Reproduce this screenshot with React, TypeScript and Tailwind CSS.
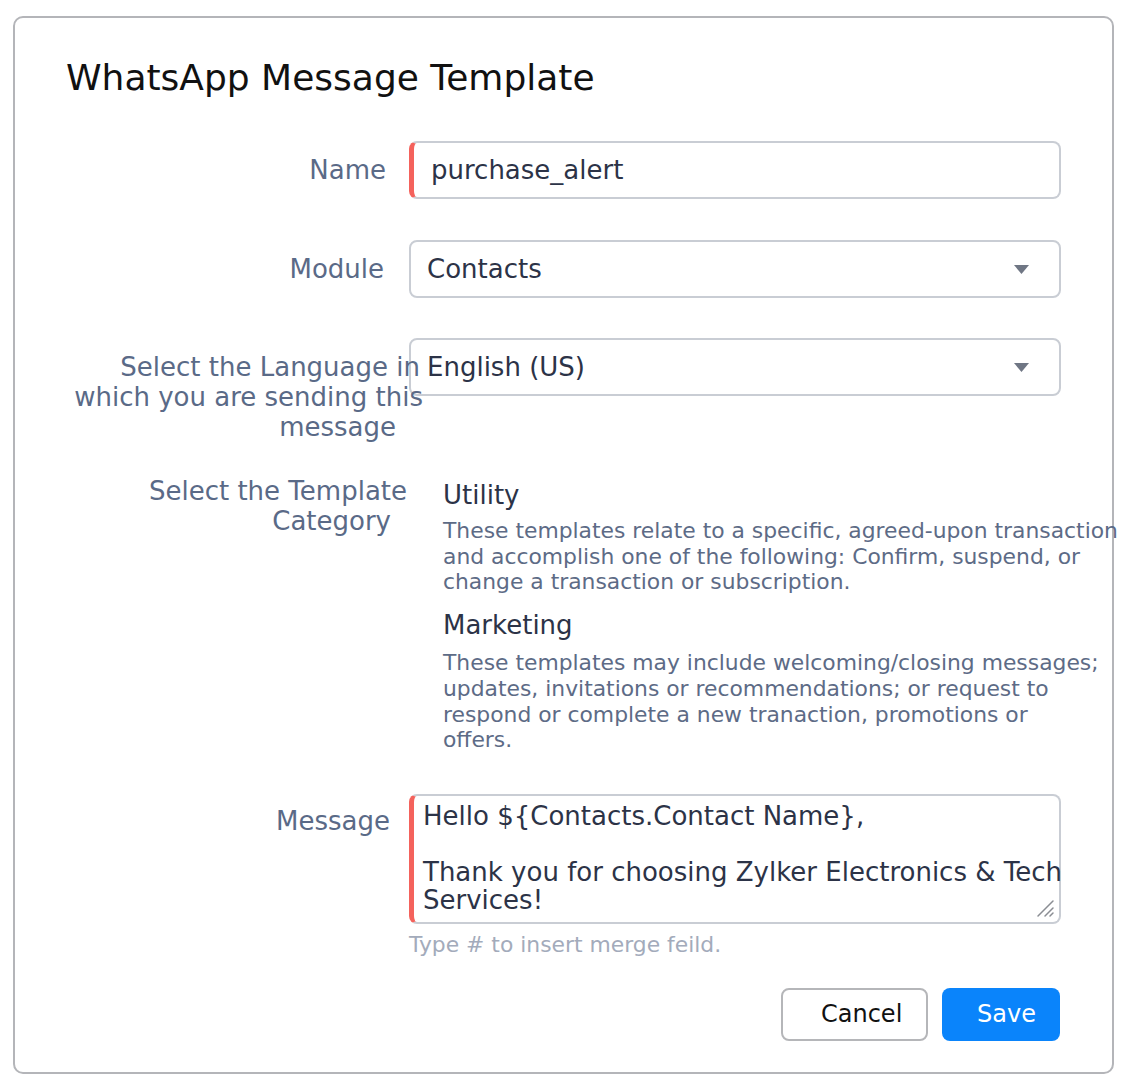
import React from "react";

const font = { fontFamily: '"DejaVu Sans", Verdana, sans-serif' };

function Caret() {
  return (
    <svg width="15" height="9" viewBox="0 0 15 9" className="shrink-0">
      <path d="M0 0 H15 L7.5 9 Z" fill="#6f7684" />
    </svg>
  );
}

function SelectBox({ value }: { value: string }) {
  return (
    <div className="flex h-[58px] w-[652px] items-center justify-between rounded-[8px] border-2 border-[#c9cdd4] pl-[16px] pr-[30px] text-[26px] text-[#2c3347]">
      <span>{value}</span>
      <Caret />
    </div>
  );
}

export default function App() {
  return (
    <div className="min-h-[1087px] bg-white pl-[13px] pt-[16px]" style={font}>
      <div className="h-[1058px] w-[1101px] rounded-[10px] border-2 border-[#b4b5b9] pl-[51px] pt-[39px]">
        <h1 className="text-[36px] leading-[42px] text-[#111111]">WhatsApp Message Template</h1>

        {/* Name */}
        <div className="mt-[42px] flex items-center">
          <div className="w-[322px] shrink-0 pr-[2px] text-right text-[26px] text-[#5a6a87]">Name</div>
          <div className="ml-[21px] flex h-[58px] w-[652px] items-center rounded-[8px] border-2 border-l-[5px] border-[#c9cdd4] border-l-[#f4625c] pl-[17px] text-[26px] text-[#2c3347]">
            purchase_alert
          </div>
        </div>

        {/* Module */}
        <div className="mt-[41px] flex items-center">
          <div className="w-[322px] shrink-0 pr-[4px] text-right text-[26px] text-[#5a6a87]">Module</div>
          <div className="ml-[21px]">
            <SelectBox value="Contacts" />
          </div>
        </div>

        {/* Language */}
        <div className="mt-[40px] flex items-start">
          <div className="relative z-10 w-[322px] shrink-0 pt-[14px] text-right text-[26px] leading-[30px] text-[#5a6a87]">
            <span className="-mr-[32px] block whitespace-nowrap">Select the Language in</span>
            <span className="-mr-[35px] block whitespace-nowrap">which you are sending this</span>
            <span className="-mr-[8px] block whitespace-nowrap">message</span>
          </div>
          <div className="ml-[21px]">
            <SelectBox value="English (US)" />
          </div>
        </div>

        {/* Category */}
        <div className="mt-[34px] flex items-start">
          <div className="w-[322px] shrink-0 text-right text-[26px] leading-[30px] text-[#5a6a87]">
            <span className="-mr-[19px] block whitespace-nowrap">Select the Template</span>
            <span className="-mr-[3px] block whitespace-nowrap">Category</span>
          </div>
          <div className="ml-[55px] pt-[2px]">
            <div className="text-[26px] leading-[34px] text-[#2c3347]">Utility</div>
            <div className="mt-[6px] whitespace-nowrap text-[21.85px] leading-[25.7px] text-[#5d6b86]">
              <div>These templates relate to a specific, agreed-upon transaction</div>
              <div>and accomplish one of the following: Confirm, suspend, or</div>
              <div>change a transaction or subscription.</div>
            </div>
            <div className="mt-[13px] text-[26px] leading-[34px] text-[#2c3347]">Marketing</div>
            <div className="mt-[8px] whitespace-nowrap text-[21.85px] leading-[25.7px] text-[#5d6b86]">
              <div>These templates may include welcoming/closing messages;</div>
              <div>updates, invitations or recommendations; or request to</div>
              <div>respond or complete a new tranaction, promotions or</div>
              <div>offers.</div>
            </div>
          </div>
        </div>

        {/* Message */}
        <div className="mt-[41px] flex items-start">
          <div className="w-[322px] shrink-0 pt-[12px] text-right text-[26px] leading-[30px] text-[#5a6a87]">
            <span className="-mr-[2px] block">Message</span>
          </div>
          <div className="ml-[21px]">
            <div className="relative h-[130px] w-[652px] rounded-[8px] border-2 border-l-[5px] border-[#c9cdd4] border-l-[#f4625c] pl-[9px] pt-[6px] text-[26px] leading-[28px] text-[#2c3347]">
              <div className="whitespace-nowrap">Hello ${"{"}Contacts.Contact Name{"}"},</div>
              <div className="h-[28px]" />
              <div className="whitespace-nowrap">Thank you for choosing Zylker Electronics &amp; Tech</div>
              <div className="whitespace-nowrap">Services!</div>
              <svg width="20" height="20" viewBox="0 0 20 20" className="absolute bottom-[4px] right-[4px]">
                <path d="M18 3 L3 18 M18 10 L10 18 M18 15 L15 18" stroke="#8a8d93" strokeWidth="1.5" strokeLinecap="round" />
              </svg>
            </div>
            <div className="mt-[8px] text-[21.85px] leading-[26px] text-[#a3abbb]">Type # to insert merge feild.</div>
            <div className="mt-[30px] flex justify-end gap-[14px] pr-[1px]">
              <button className="h-[53px] w-[147px] rounded-[8px] border-2 border-[#b5b6b9] bg-white pl-[38px] text-left text-[24px] text-[#111111]">
                Cancel
              </button>
              <button className="h-[53px] w-[118px] rounded-[8px] bg-[#0a84fb] pl-[35px] text-left text-[24px] text-white">
                Save
              </button>
            </div>
          </div>
        </div>
      </div>
    </div>
  );
}
